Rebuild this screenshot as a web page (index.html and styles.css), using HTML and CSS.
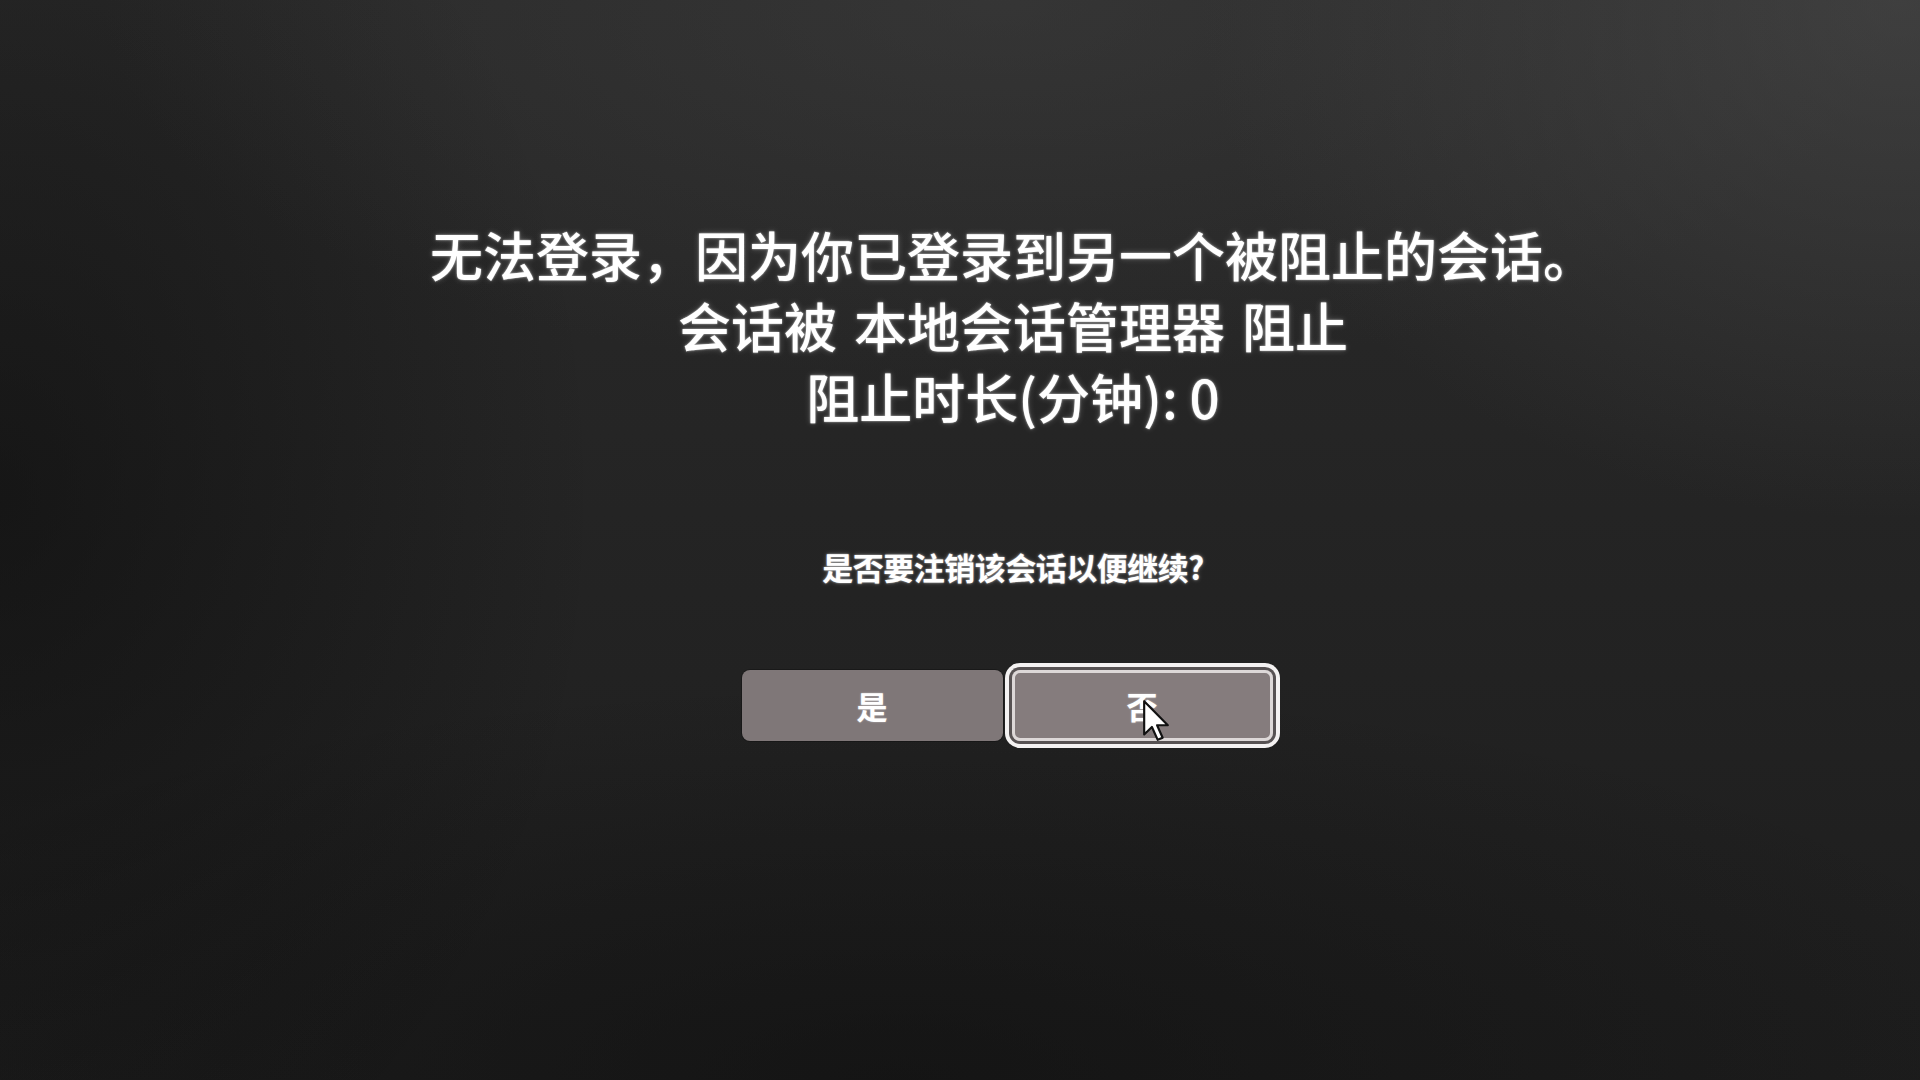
FILE: index.html
```html
<!DOCTYPE html>
<html lang="zh-CN">
<head>
<meta charset="utf-8">
<title>无法登录</title>
<link rel="stylesheet" href="styles.css">
</head>
<body>
<main class="screen">
  <div class="content">
    <h1 class="title">
      <span class="line">无法登录，因为你已登录到另一个被阻止的会话。</span>
      <span class="line line-spaced">会话被 本地会话管理器 阻止</span>
      <span class="line">阻止时长(分钟): 0</span>
    </h1>
    <p class="question">是否要注销该会话以便继续?</p>
    <div class="buttons">
      <button class="btn">是</button>
      <button class="btn btn-focus">否
        <svg class="cursor" viewBox="0 0 13 20" width="28" height="43" aria-hidden="true">
          <path d="M1 1 L1 16.5 L4.6 13 L7.3 19 L9.6 18 L7 12.2 L12 12.2 Z" fill="#ffffff" stroke="#111111" stroke-width="1" stroke-linejoin="round"/>
        </svg>
      </button>
    </div>
  </div>
</main>
</body>
</html>
```

FILE: styles.css
```css
html, body {
  margin: 0;
  padding: 0;
  width: 1920px;
  height: 1080px;
  overflow: hidden;
}

body {
  background: #222222;
  font-family: "Noto Sans CJK SC", "Noto Sans", sans-serif;
  color: #ffffff;
}

.screen {
  width: 1920px;
  height: 1080px;
  box-sizing: border-box;
  padding-top: 219px;
  padding-left: 106px;
  background:
    radial-gradient(ellipse 700px 520px at 1900px 0px, rgba(80, 80, 80, 0.55), rgba(80, 80, 80, 0) 100%),
    radial-gradient(ellipse 900px 380px at 1000px 0px, rgba(70, 70, 70, 0.4), rgba(70, 70, 70, 0) 100%),
    radial-gradient(ellipse 600px 800px at 0px 500px, rgba(8, 8, 8, 0.5), rgba(8, 8, 8, 0) 100%),
    radial-gradient(ellipse 1200px 400px at 900px 1080px, rgba(12, 12, 12, 0.5), rgba(12, 12, 12, 0) 100%),
    linear-gradient(180deg, #2a2a2a 0%, #252525 40%, #212121 70%, #1d1d1d 100%);
}

.content {
  display: flex;
  flex-direction: column;
  align-items: center;
}

.title {
  margin: 0;
  display: flex;
  flex-direction: column;
  align-items: center;
  font-size: 53px;
  line-height: 71px;
  font-weight: 500;
  letter-spacing: 0;
  text-shadow: 0 0 2px rgba(255, 255, 255, 0.75), 0 0 6px rgba(255, 255, 255, 0.25);
}

.line {
  display: block;
  white-space: pre;
}

.line-spaced {
  word-spacing: 5px;
}

.question {
  margin: 115px 0 0 0;
  font-size: 31px;
  line-height: 40px;
  font-weight: 700;
  letter-spacing: -0.5px;
  text-shadow: 0 0 2px rgba(255, 255, 255, 0.7), 0 0 5px rgba(255, 255, 255, 0.25);
}

.buttons {
  margin-top: 83px;
  margin-right: 12px;
  display: flex;
  gap: 9px;
}

.btn {
  position: relative;
  width: 261px;
  height: 71px;
  border: none;
  border-radius: 8px;
  background: #7f7778;
  color: #ffffff;
  font-family: "Noto Sans CJK SC", "Noto Sans", sans-serif;
  font-size: 31px;
  font-weight: 700;
  padding: 0;
  text-shadow: 0 0 2px rgba(255, 255, 255, 0.5);
  box-shadow: 0 0 0 1px rgba(0, 0, 0, 0.25);
}

.btn-focus {
  background: #857c7d;
  box-shadow:
    inset 0 0 0 3px #ddd8d8,
    0 0 0 3px #575253,
    0 0 0 7px #f4f2f2;
}

.cursor {
  position: absolute;
  left: 130px;
  top: 29px;
}
```
